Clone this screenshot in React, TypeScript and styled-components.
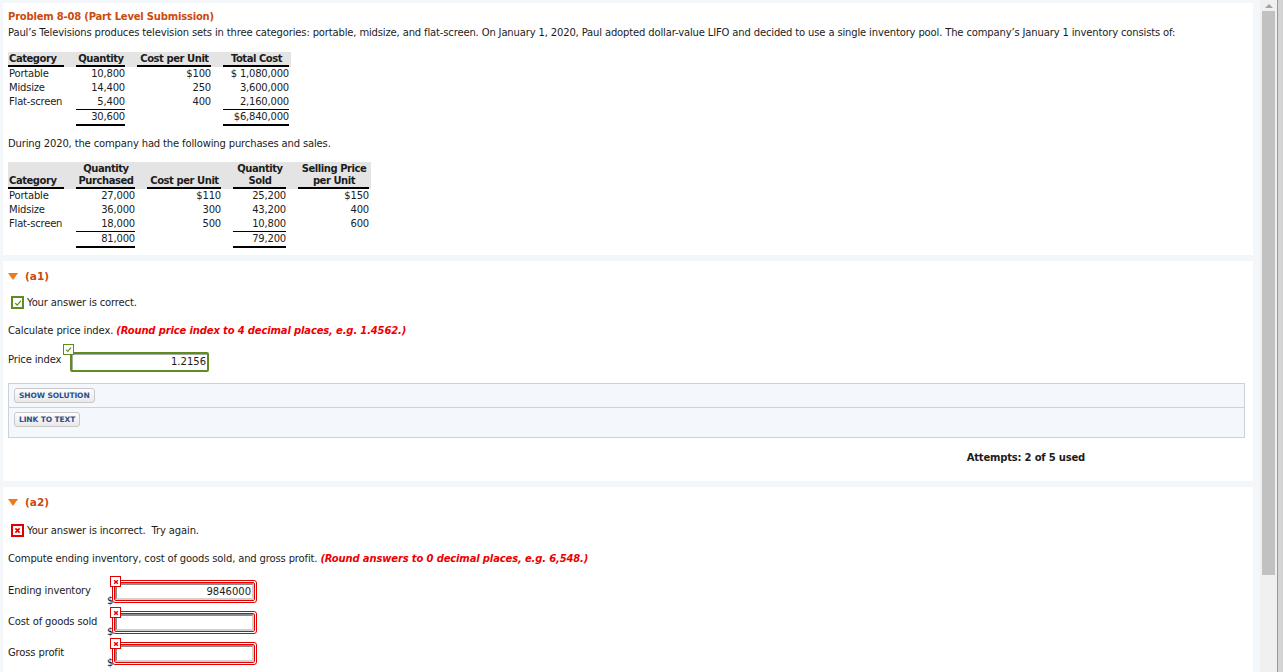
import styled, { createGlobalStyle } from 'styled-components'

const GlobalStyle = createGlobalStyle`
	html, body {
		margin: 0;
		padding: 0;
		height: 100%;
		overflow: hidden;
		background: #f4f7fa;
	}
	body {
		font-family: "DejaVu Sans", Verdana, sans-serif;
		font-size: 10px;
		color: #1c1c1c;
	}
`

const Shell = styled.div`
	display: flex;
	height: 100vh;
`

const Main = styled.div`
	flex: 1;
	display: flex;
	flex-direction: column;
	gap: 6px;
	padding: 3px 7px 0 3px;
	overflow: hidden;
`

const Panel = styled.section<{ $height?: number }>`
	background: #fff;
	padding: 7px 5px 0 5px;
	height: ${props => (props.$height ? `${props.$height}px` : 'auto')};
	box-sizing: border-box;
	flex-shrink: 0;
`

const Title = styled.div`
	color: #cc4a0c;
	font-weight: bold;
	font-size: 10px;
	letter-spacing: -0.2px;
	line-height: 14px;
`

const Para = styled.p<{ $top?: number }>`
	margin: ${props => props.$top ?? 2}px 0 0 0;
	line-height: 14px;
	letter-spacing: -0.15px;
`

const Grid = styled.div<{ $cols: number; $top: number }>`
	display: grid;
	grid-template-columns: repeat(${props => props.$cols}, max-content);
	column-gap: 12px;
	margin-top: ${props => props.$top}px;
	width: max-content;
	line-height: 14px;
	letter-spacing: -0.2px;
`

const HeadBand = styled.div`
	grid-row: 1;
	grid-column: 1 / -1;
	background: #e4e4e4;
	margin-right: -2px;
`

const Head = styled.div<{ $col: number; $align?: string; $width?: number }>`
	grid-row: 1;
	grid-column: ${props => props.$col};
	min-width: ${props => props.$width ?? 0}px;
	font-weight: bold;
	letter-spacing: -0.45px;
	white-space: nowrap;
	text-align: ${props => props.$align ?? 'center'};
	align-self: end;
	border-bottom: 2px solid #000;
	line-height: 12px;
	padding: 1px 0 0 1px;
`

const Cell = styled.div<{ $align?: string; $line?: number }>`
	text-align: ${props => props.$align ?? 'right'};
	border-bottom: ${props => (props.$line ? `${props.$line}px solid #000` : 'none')};
	padding-left: 1px;
	white-space: nowrap;
`

const Toggle = styled.div`
	display: flex;
	align-items: center;
	gap: 7px;
	color: #cc4a0c;
	font-weight: bold;
	font-size: 10.5px;
	margin-top: 2px;
`

const Triangle = styled.span`
	width: 0;
	height: 0;
	border-left: 5px solid transparent;
	border-right: 5px solid transparent;
	border-top: 7px solid #f07a17;
`

const Verdict = styled.div<{ $top?: number }>`
	display: flex;
	align-items: center;
	gap: 3px;
	margin: ${props => props.$top ?? 14}px 0 0 3px;
	letter-spacing: -0.15px;
`

const Mark = styled.span<{ $ok?: boolean; $size?: number }>`
	display: inline-flex;
	align-items: center;
	justify-content: center;
	box-sizing: border-box;
	width: ${props => props.$size ?? 13}px;
	height: ${props => props.$size ?? 13}px;
	background: #fff;
	border-style: solid;
	border-color: ${props => (props.$ok ? '#5e8c1f' : '#e00000')};
	border-width: ${props => ((props.$size ?? 13) > 11 ? 2 : 1)}px;
	color: ${props => (props.$ok ? '#5e8c1f' : '#e00000')};
`

const Hint = styled.span`
	color: #ee0000;
	font-weight: bold;
	font-style: italic;
`

const FieldRow = styled.div<{ $top?: number }>`
	display: flex;
	align-items: flex-start;
	margin-top: ${props => props.$top ?? 0}px;
`

const Label = styled.div<{ $width: number }>`
	width: ${props => props.$width}px;
	flex-shrink: 0;
	line-height: 14px;
	padding-top: 4px;
	letter-spacing: -0.15px;
`

const FieldWrap = styled.div`
	position: relative;
`

const Badge = styled.div<{ $left: number; $top: number }>`
	position: absolute;
	left: ${props => props.$left}px;
	top: ${props => props.$top}px;
	z-index: 2;
	display: flex;
`

const GreenInput = styled.div`
	box-sizing: border-box;
	width: 139px;
	height: 20px;
	border: 2px solid #5e8c1f;
	border-radius: 2px;
	margin-top: 3px;
	padding-right: 1px;
	text-align: right;
	line-height: 16px;
	background: #fff;
	box-shadow: inset 1px 1px 0 #aaa;
`

const SolutionBox = styled.div`
	margin-top: 11px;
	border: 1px solid #c9d3e0;
	background: #f4f7fb;
	margin-right: 3px;
`

const SolutionRow = styled.div<{ $last?: boolean }>`
	padding: 4px 0 ${props => (props.$last ? 10 : 4)}px 5px;
	border-bottom: ${props => (props.$last ? 'none' : '1px solid #c9d3e0')};
`

const Button = styled.button`
	display: block;
	font-family: "DejaVu Sans", Verdana, sans-serif;
	font-size: 7.5px;
	font-weight: bold;
	color: #2b4f8a;
	letter-spacing: -0.1px;
	height: 15px;
	padding: 0 4px;
	border: 1px solid #c8c8c8;
	border-radius: 3px;
	background: linear-gradient(#fdfdfd, #e9e9e9);
	line-height: 13px;
`

const Attempts = styled.div`
	display: flex;
	justify-content: flex-end;
	padding-right: 163px;
	margin-top: 14px;
	font-weight: bold;
	letter-spacing: -0.2px;
`

const Dollar = styled.span`
	align-self: flex-end;
	width: 5px;
	margin-left: -2px;
	margin-right: 0;
	line-height: 10px;
	margin-bottom: -3px;
	font-size: 10px;
	letter-spacing: -1px;
`

const RedInput = styled.div`
	box-sizing: border-box;
	width: 145px;
	height: 23px;
	border: 1px solid #e00000;
	border-radius: 3px;
	padding: 1px;
	background: #fff;
`

const RedInner = styled.div`
	box-sizing: border-box;
	height: 100%;
	border: 1px solid #e00000;
	border-radius: 2px;
	background: #fff;
`

const RedField = styled.div`
	box-sizing: border-box;
	height: 100%;
	border: 2px solid #8c8c8c;
	border-right-color: #d0d0d0;
	border-bottom-color: #d0d0d0;
	text-align: right;
	padding-right: 1px;
	line-height: 13px;
`

const AnswerRows = styled.div`
	display: flex;
	flex-direction: column;
	gap: 8px;
	margin-top: 14px;
`

const Scrollbar = styled.div`
	width: 23px;
	display: flex;
	flex-shrink: 0;
`

const Track = styled.div`
	width: 17px;
	background: #f0f0f0;
	display: flex;
	flex-direction: column;
	align-items: center;
`

const Arrow = styled.div`
	width: 0;
	height: 0;
	margin-top: 4px;
	border-left: 4px solid transparent;
	border-right: 4px solid transparent;
	border-bottom: 4px solid #a3a3a3;
`

const Thumb = styled.div`
	width: 13px;
	height: 564px;
	margin-top: 3px;
	background: #c1c1c1;
`

const Edge = styled.div`
	flex: 1;
	background: #d4d4d4;
	border-left: 1px solid #9a9a9a;
`

const Check = ({ size = 8 }: { size?: number }) => (
	<svg width={size} height={size} viewBox="0 0 10 10">
		<path d="M1.5 5.2 L4 7.6 L8.6 2.4" fill="none" stroke="#5e8c1f" strokeWidth="1.6" />
	</svg>
)

const Cross = ({ size = 7 }: { size?: number }) => (
	<svg width={size} height={size} viewBox="0 0 10 10">
		<path d="M2 2 L8 8 M8 2 L2 8" fill="none" stroke="#e00000" strokeWidth="2.4" />
	</svg>
)

const inventory = [
	['Portable', '10,800', '$100', '$ 1,080,000'],
	['Midsize', '14,400', '250', '3,600,000'],
	['Flat-screen', '5,400', '400', '2,160,000'],
]

const purchases = [
	['Portable', '27,000', '$110', '25,200', '$150'],
	['Midsize', '36,000', '300', '43,200', '400'],
	['Flat-screen', '18,000', '500', '10,800', '600'],
]

// columns that get a rule under the last row and a heavy rule under the total
const inventoryTotals: Record<number, string> = { 1: '30,600', 3: '$6,840,000' }
const purchaseTotals: Record<number, string> = { 1: '81,000', 3: '79,200' }

const answers = [
	{ label: 'Ending inventory', value: '9846000' },
	{ label: 'Cost of goods sold', value: '' },
	{ label: 'Gross profit', value: '' },
]

const Body = ({ rows, totals }: { rows: string[][]; totals: Record<number, string> }) => (
	<>
		{rows.map((row, r) =>
			row.map((v, c) => (
				<Cell
					key={`${r}-${c}`}
					$align={c === 0 ? 'left' : 'right'}
					$line={r === rows.length - 1 && totals[c] ? 1 : 0}
				>
					{v}
				</Cell>
			))
		)}
		{rows[0].map((_, c) => (
			<Cell key={`t-${c}`} $line={totals[c] ? 2 : 0}>
				{totals[c] ?? ''}
			</Cell>
		))}
	</>
)

export default function App() {
	return (
		<>
			<GlobalStyle />
			<Shell>
				<Main>
					<Panel $height={252}>
						<Title>Problem 8-08 (Part Level Submission)</Title>
						<Para>
							Paul’s Televisions produces television sets in three categories: portable, midsize, and
							flat-screen. On January 1, 2020, Paul adopted dollar-value LIFO and decided to use a single
							inventory pool. The company’s January 1 inventory consists of:
						</Para>
						<Grid $cols={4} $top={12}>
							<HeadBand />
							<Head $col={1} $align="left" $width={55}>Category</Head>
							<Head $col={2} $width={48}>Quantity</Head>
							<Head $col={3} $width={73}>Cost per Unit</Head>
							<Head $col={4} $width={65}>Total Cost</Head>
							<Body rows={inventory} totals={inventoryTotals} />
						</Grid>
						<Para $top={11}>During 2020, the company had the following purchases and sales.</Para>
						<Grid $cols={5} $top={11}>
							<HeadBand />
							<Head $col={1} $align="left" $width={55}>Category</Head>
							<Head $col={2} $width={58}>Quantity<br />Purchased</Head>
							<Head $col={3} $width={73}>Cost per Unit</Head>
							<Head $col={4} $width={52}>Quantity<br />Sold</Head>
							<Head $col={5} $width={70}>Selling Price<br />per Unit</Head>
							<Body rows={purchases} totals={purchaseTotals} />
						</Grid>
					</Panel>

					<Panel $height={220}>
						<Toggle>
							<Triangle />
							(a1)
						</Toggle>
						<Verdict>
							<Mark $ok>
								<Check />
							</Mark>
							Your answer is correct.
						</Verdict>
						<Para $top={15}>
							Calculate price index. <Hint>(Round price index to 4 decimal places, e.g. 1.4562.)</Hint>
						</Para>
						<FieldRow $top={11}>
							<Label $width={62}>Price index</Label>
							<FieldWrap>
								<Badge $left={-7} $top={-5}>
									<Mark $ok $size={11}>
										<Check size={7} />
									</Mark>
								</Badge>
								<GreenInput>1.2156</GreenInput>
							</FieldWrap>
						</FieldRow>
						<SolutionBox>
							<SolutionRow>
								<Button>SHOW SOLUTION</Button>
							</SolutionRow>
							<SolutionRow $last>
								<Button>LINK TO TEXT</Button>
							</SolutionRow>
						</SolutionBox>
						<Attempts>Attempts: 2 of 5 used</Attempts>
					</Panel>

					<Panel style={{ flex: 1 }}>
						<Toggle>
							<Triangle />
							(a2)
						</Toggle>
						<Verdict $top={16}>
							<Mark>
								<Cross />
							</Mark>
							Your answer is incorrect.&nbsp; Try again.
						</Verdict>
						<Para $top={15}>
							Compute ending inventory, cost of goods sold, and gross profit.{' '}
							<Hint>(Round answers to 0 decimal places, e.g. 6,548.)</Hint>
						</Para>
						<AnswerRows>
							{answers.map(a => (
								<FieldRow key={a.label}>
									<Label $width={101}>{a.label}</Label>
									<Dollar>$</Dollar>
									<FieldWrap>
										<Badge $left={-2} $top={-4}>
											<Mark $size={11}>
												<Cross size={6} />
											</Mark>
										</Badge>
										<RedInput>
											<RedInner>
												<RedField>{a.value}</RedField>
											</RedInner>
										</RedInput>
									</FieldWrap>
								</FieldRow>
							))}
						</AnswerRows>
					</Panel>
				</Main>
				<Scrollbar>
					<Track>
						<Arrow />
						<Thumb />
					</Track>
					<Edge />
				</Scrollbar>
			</Shell>
		</>
	)
}
